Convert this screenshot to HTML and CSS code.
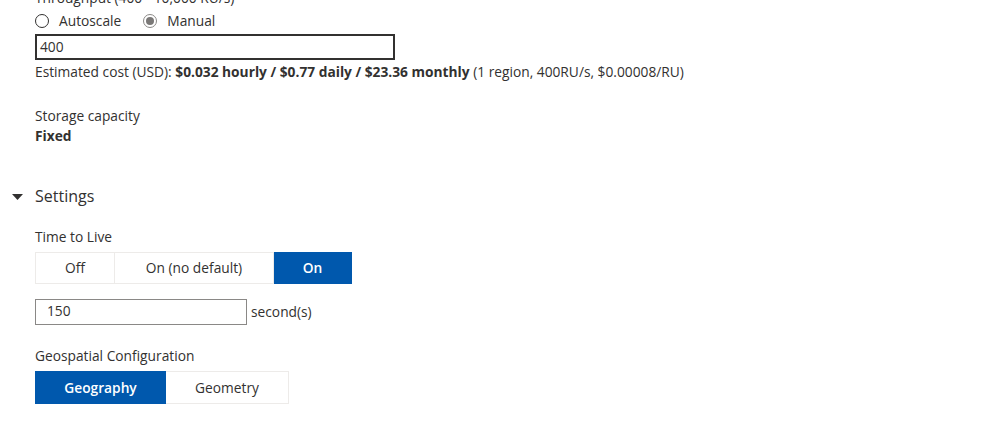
FILE: index.html
```html
<!DOCTYPE html>
<html>
<head>
<meta charset="utf-8">
<link rel="stylesheet" href="styles.css">
</head>
<body>
<div class="page">
  <div class="section">
    <div class="label top-label">Throughput (400 - 10,000 RU/s)</div>
    <div class="radio-row">
      <label class="radio"><span class="circle"></span><span>Autoscale</span></label>
      <label class="radio"><span class="circle checked"></span><span>Manual</span></label>
    </div>
    <div class="text-input wide focused">400</div>
    <div class="cost">Estimated cost (USD): <b>$0.032 hourly / $0.77 daily / $23.36 monthly</b> (1 region, 400RU/s, $0.00008/RU)</div>
    <div class="label storage">Storage capacity</div>
    <div class="value">Fixed</div>
  </div>

  <div class="settings-header">
    <svg class="caret" width="11" height="6" viewBox="0 0 11 6"><path d="M0 0 L11 0 L5.5 6 Z" fill="#323130"/></svg>
    <span>Settings</span>
  </div>

  <div class="section">
    <div class="label ttl">Time to Live</div>
    <div class="btn-group">
      <div class="btn w-off">Off</div>
      <div class="btn w-nodef">On (no default)</div>
      <div class="btn w-on selected">On</div>
    </div>
    <div class="seconds-row">
      <div class="text-input small">150</div>
      <span class="unit">second(s)</span>
    </div>
    <div class="label geo">Geospatial Configuration</div>
    <div class="btn-group">
      <div class="btn w-geog selected">Geography</div>
      <div class="btn w-geom">Geometry</div>
    </div>
  </div>
</div>
</body>
</html>
```

FILE: styles.css
```css
html, body {
  margin: 0;
  padding: 0;
  background: #ffffff;
}
body {
  font-family: "Segoe UI", "Open Sans", "Noto Sans", sans-serif;
  font-size: 13.75px;
  color: #323130;
  overflow: hidden;
}
.page {
  padding-left: 12px;
}
.section {
  padding-left: 23px;
  display: flex;
  flex-direction: column;
  align-items: flex-start;
}
.label {
  line-height: 20px;
  color: #323130;
}
.top-label {
  margin-top: -12px;
  margin-bottom: 3px;
}
.radio-row {
  display: flex;
  height: 20px;
  align-items: center;
  gap: 22px;
}
.radio {
  display: flex;
  align-items: center;
  gap: 10px;
  line-height: 20px;
}
.circle {
  width: 12px;
  height: 12px;
  border: 1px solid #323130;
  border-radius: 50%;
  box-sizing: content-box;
  position: relative;
}
.circle.checked {
  border-color: #8a8886;
}
.circle.checked::after {
  content: "";
  position: absolute;
  left: 2px;
  top: 2px;
  width: 8px;
  height: 8px;
  border-radius: 50%;
  background: #7a7877;
}
.text-input {
  box-sizing: border-box;
  height: 26px;
  line-height: 22px;
  border: 1px solid #8a8886;
  padding: 0 11px;
  background: #fff;
  color: #323130;
}
.text-input.wide {
  width: 360px;
  margin-top: 3px;
  padding-left: 4px;
}
.text-input.focused {
  border: 2px solid #323130;
  padding-left: 3px;
}
.cost {
  line-height: 20px;
  margin-top: 2px;
  white-space: nowrap;
}
.cost b {
  font-weight: 700;
}
.storage {
  margin-top: 24px;
}
.value {
  font-weight: 700;
  line-height: 20px;
}
.settings-header {
  display: flex;
  align-items: center;
  gap: 12px;
  margin-top: 39px;
  height: 22px;
  font-size: 16px;
}
.caret {
  display: block;
  margin-top: 1px;
}
.ttl {
  margin-top: 20px;
}
.btn-group {
  display: flex;
  margin-top: 5px;
}
.btn {
  box-sizing: border-box;
  height: 32px;
  line-height: 30px;
  border: 1px solid #edebe9;
  text-align: center;
  background: #fff;
  color: #323130;
}
.btn + .btn {
  border-left: none;
}
.btn.selected {
  background: #0058ad;
  border-color: #0058ad;
  color: #ffffff;
  font-weight: 600;
}
.w-off { width: 80px; }
.w-nodef { width: 159px; }
.w-on { width: 78px; }
.w-geog { width: 131px; }
.w-geom { width: 123px; }
.btn-group:last-child .btn {
  height: 33px;
  line-height: 31px;
}
.seconds-row {
  display: flex;
  align-items: center;
  gap: 4px;
  margin-top: 15px;
}
.text-input.small {
  width: 212px;
}
.unit {
  line-height: 20px;
}
.geo {
  margin-top: 21px;
}
```
